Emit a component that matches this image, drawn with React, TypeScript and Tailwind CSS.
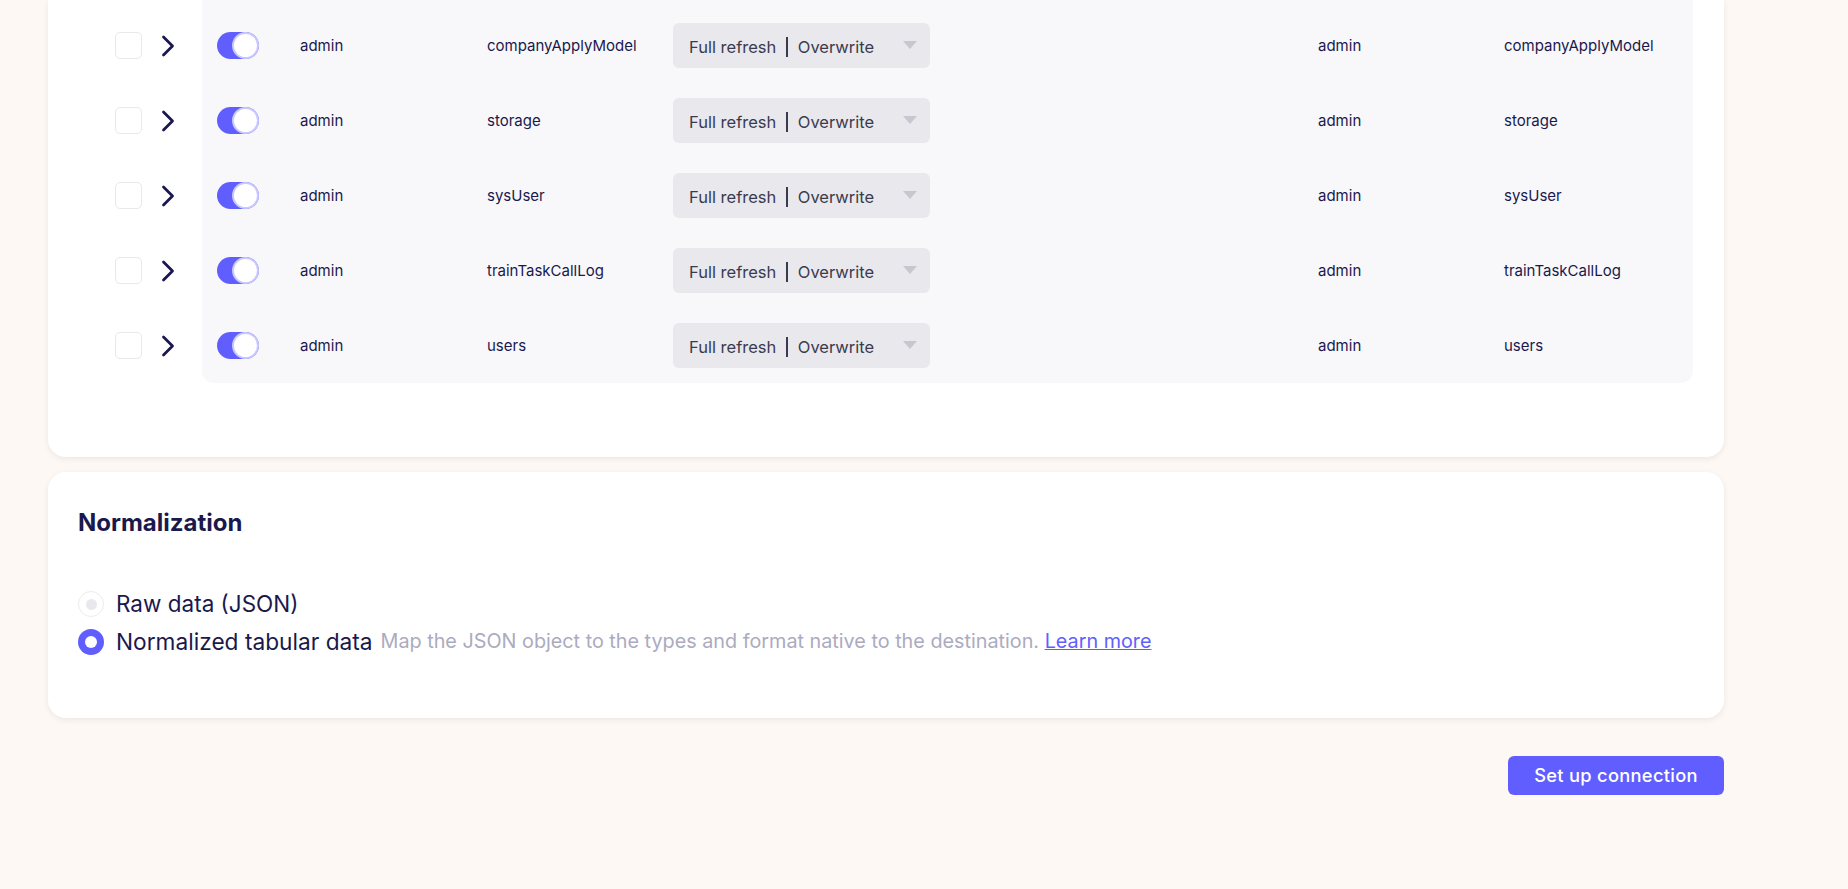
const streams = ['companyApplyModel', 'storage', 'sysUser', 'trainTaskCallLog', 'users'];

const Toggle = () => (
    <div className="relative w-[42px] h-[27px] rounded-full bg-[#615eff]">
        <div className="absolute right-0 top-0 w-[27px] h-[27px] rounded-full bg-white border-2 border-[#c9c8ff]" />
    </div>
);

const SyncModeSelect = () => (
    <div className="w-[257px] h-[45px] rounded-[6px] bg-[#e8e8ed] flex items-center pl-4 pr-3 pt-[3px] text-[16.5px] text-[#3b3b4f]">
        <span>Full refresh</span>
        <span className="mx-[10px] w-[1.5px] h-[20px] bg-[#3b3b4f]" />
        <span>Overwrite</span>
        <svg className="ml-auto mr-[1px] -mt-[3px]" width="14" height="9" viewBox="0 0 14 9">
            <path d="M0 0 L14 0 L7 8 Z" fill="#c7c7d0" />
        </svg>
    </div>
);

const Chevron = () => (
    <svg className="ml-[19px]" width="14" height="22" viewBox="0 0 14 22" fill="none">
        <path d="M2.5 2 L11.5 11 L2.5 20" stroke="#1a194d" strokeWidth="2.8" strokeLinecap="round" strokeLinejoin="round" />
    </svg>
);

const StreamRow = ({ name, last }: { name: string; last: boolean }) => (
    <div className="flex h-[75px]">
        <div className="w-[154px] flex items-center pl-[67px]">
            <div className="w-[27px] h-[27px] rounded-[5px] border border-[#e8e8ed] bg-white" />
            <Chevron />
        </div>
        <div className={`flex-1 flex items-center bg-[#f8f8fa] text-[15px] text-[#1a194d] ${last ? 'rounded-b-[12px]' : ''}`}>
            <div className="w-[98px] pl-[15px]">
                <Toggle />
            </div>
            <div className="w-[187px] pt-[1px]">admin</div>
            <div className="w-[186px] pt-[1px]">{name}</div>
            <div className="w-[645px]">
                <SyncModeSelect />
            </div>
            <div className="w-[186px] pt-[1px]">admin</div>
            <div className="flex-1 pt-[1px]">{name}</div>
        </div>
    </div>
);

const Radio = ({ checked }: { checked: boolean }) =>
    checked ? (
        <div className="w-[26px] h-[26px] shrink-0 rounded-full bg-[#615eff] flex items-center justify-center">
            <div className="w-[12px] h-[12px] rounded-full bg-white" />
        </div>
    ) : (
        <div className="w-[26px] h-[26px] shrink-0 rounded-full border border-[#ececf1] bg-white flex items-center justify-center">
            <div className="w-[11px] h-[11px] rounded-full bg-[#e8e8ed]" />
        </div>
    );

export default function App() {
    return (
        <div className="min-h-screen bg-[#fdf8f4] font-['Inter',sans-serif] text-[#1a194d]">
            <div className="w-[1676px] ml-[48px]">
                {/* Streams card, scrolled so its top is off screen */}
                <div className="bg-white rounded-b-[18px] shadow-[0_2px_6px_rgba(0,0,0,0.07)] pr-[31px] pb-[74px]">
                    <div className="flex">
                        <div className="w-[154px]" />
                        <div className="flex-1 h-[8px] bg-[#f8f8fa]" />
                    </div>
                    {streams.map((s, i) => (
                        <StreamRow key={s} name={s} last={i === streams.length - 1} />
                    ))}
                </div>

                {/* Normalization card */}
                <div className="mt-[15px] bg-white rounded-[18px] shadow-[0_2px_6px_rgba(0,0,0,0.07)] px-[30px] pt-[37px] pb-[63px]">
                    <h2 className="text-[24px] font-bold leading-[28px]">Normalization</h2>
                    <div className="mt-[54px] flex flex-col gap-[12px]">
                        <label className="flex items-center gap-[12px] h-[26px]">
                            <Radio checked={false} />
                            <span className="text-[22.5px]">Raw data (JSON)</span>
                        </label>
                        <label className="flex items-center gap-[12px] h-[26px] whitespace-nowrap">
                            <Radio checked />
                            <span className="text-[22.7px]">Normalized tabular data</span>
                            <span className="text-[19.8px] text-[#ababbf] -ml-[4px]">
                                Map the JSON object to the types and format native to the destination.{' '}
                                <a className="text-[#615eff] underline">Learn more</a>
                            </span>
                        </label>
                    </div>
                </div>

                <div className="flex justify-end mt-[38px]">
                    <button className="w-[216px] h-[39px] rounded-[6px] bg-[#615eff] text-white text-[18.3px] font-medium tracking-[0.3px]">
                        Set up connection
                    </button>
                </div>
            </div>
        </div>
    );
}
